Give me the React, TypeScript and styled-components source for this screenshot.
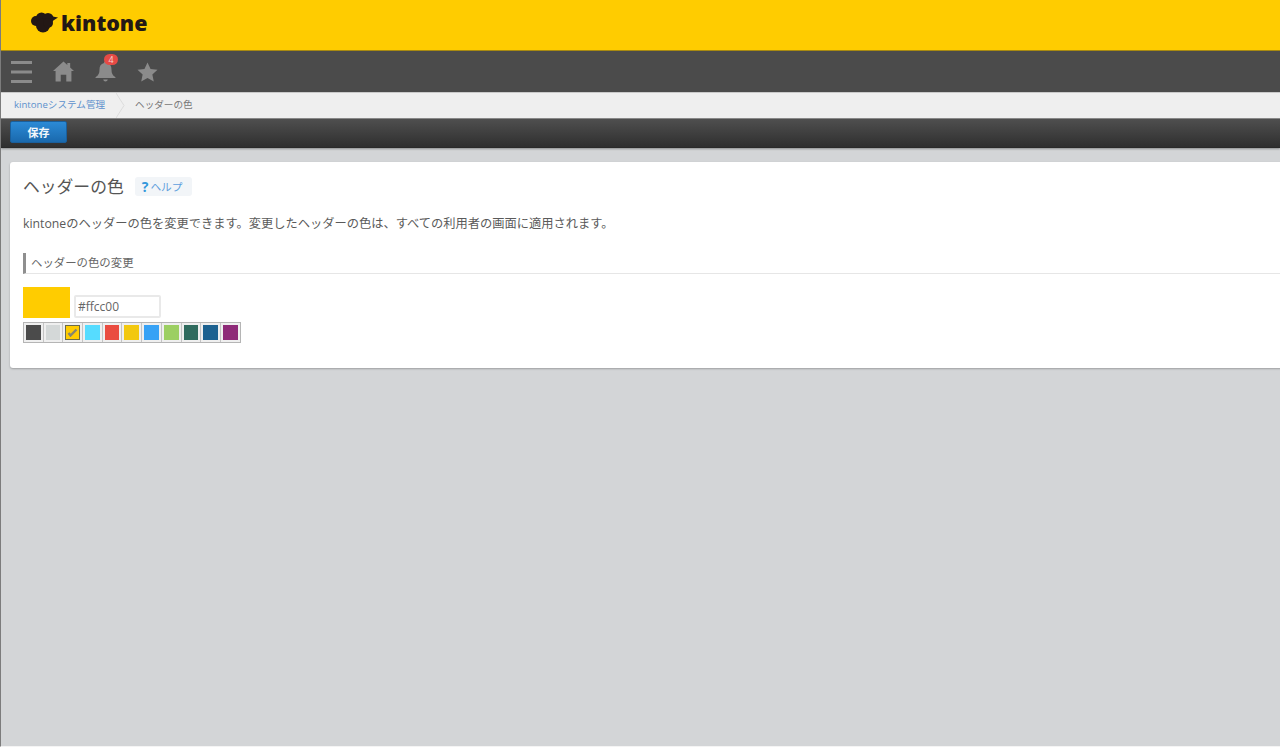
import React from "react";
import styled, { createGlobalStyle } from "styled-components";

const Global = createGlobalStyle`
  html, body { margin: 0; padding: 0; overflow: hidden; }
  body { font-family: "Open Sans", "Noto Sans CJK JP", sans-serif; color: #4a4a4a; }
  * { box-sizing: border-box; }
`;

const Page = styled.div`
  width: 1280px;
  height: 747px;
  display: flex;
  flex-direction: column;
  overflow: hidden;
  border-left: 1px solid #7c7c7c;
  border-bottom: 1px solid #f4f4f4;
  background-color: #d3d5d7;
`;

const BrandBar = styled.header`
  height: 51px;
  flex: none;
  background: #ffcc00;
  border-bottom: 1px solid #a88a10;
  display: flex;
  align-items: center;
  padding: 0 0 5px 30px;
  gap: 3px;
`;

const LogoText = styled.span`
  font-family: "Open Sans", sans-serif;
  font-weight: 800;
  font-size: 21.4px;
  line-height: 30px;
  color: #231815;
`;

const NavBar = styled.nav`
  height: 41px;
  flex: none;
  background: #4b4b4b;
  display: flex;
  align-items: center;
  padding-left: 8px;
  gap: 18px;
`;

const NavIcon = styled.div`
  position: relative;
  width: 24px;
  height: 24px;
  display: flex;
  align-items: center;
  justify-content: center;
`;

const Badge = styled.span`
  position: absolute;
  top: -6px;
  left: 11px;
  width: 14px;
  height: 11px;
  border-radius: 6px;
  background: #e64a45;
  color: #f4d4d0;
  font-family: "Open Sans", sans-serif;
  font-size: 9px;
  line-height: 11px;
  text-align: center;
`;

const Crumbs = styled.div`
  height: 27px;
  flex: none;
  background: #efefef;
  border-top: 1px solid #c9c9c9;
  border-bottom: 1px solid #8c8c8c;
  display: flex;
  align-items: center;
  font-size: 9.6px;
  padding: 0 0 3px 13px;
`;

const CrumbLink = styled.a`
  color: #5c90cc;
`;

const CrumbSep = styled.svg`
  width: 9px;
  height: 25px;
  margin: 3px 10px 0 11px;
  flex: none;
`;

const CrumbCurrent = styled.span`
  color: #777;
`;

const Toolbar = styled.div`
  height: 29px;
  flex: none;
  background: linear-gradient(#4f4f4f, #2f2f2f);
  border-bottom: 1px solid #2a2a2a;
  box-shadow: 0 1px 2px rgba(0,0,0,.35);
  display: flex;
  align-items: center;
  padding: 0 0 2px 9px;
`;

const SaveButton = styled.button`
  width: 57px;
  height: 22px;
  padding: 0;
  border: 1px solid #1a5f9c;
  border-radius: 2px;
  background: linear-gradient(#2b8ad6, #1a69ad);
  color: #f4f8fb;
  font-family: "Noto Sans CJK JP", sans-serif;
  font-size: 11px;
  font-weight: 700;
  line-height: 18px;
`;

const Content = styled.main`
  flex: 1;
  padding: 14px 0 0 9px;
  min-height: 0;
`;

const Card = styled.section`
  width: 1285px;
  height: 206px;
  background: #fff;
  border-radius: 3px;
  box-shadow: 0 1px 2px rgba(0,0,0,.25);
  padding: 14px 0 0 13px;
`;

const TitleRow = styled.div`
  display: flex;
  align-items: center;
  height: 22px;
  gap: 11px;
`;

const Title = styled.h1`
  margin: 0;
  font-size: 16.8px;
  font-weight: 400;
  line-height: 22px;
  color: #555;
`;

const HelpChip = styled.a`
  display: flex;
  align-items: center;
  height: 19px;
  width: 57px;
  margin-bottom: 2px;
  padding-left: 7px;
  background: #f2f5f8;
  border-radius: 3px;
  color: #5f9fdd;
  font-size: 10.7px;
  font-weight: 400;
  gap: 2px;
`;

const HelpMark = styled.span`
  font-family: "Open Sans", sans-serif;
  font-weight: 700;
  font-size: 14px;
  color: #3498db;
`;

const Description = styled.p`
  margin: 16px 0 0;
  font-size: 12.25px;
  line-height: 20px;
  color: #5a5a5a;
  white-space: nowrap;
`;

const SectionHead = styled.h2`
  margin: 19px 0 0;
  height: 21px;
  border-left: 3px solid #8f8f8f;
  border-bottom: 1px solid #e6e6e6;
  padding-left: 5px;
  font-size: 11.4px;
  font-weight: 400;
  line-height: 19px;
  color: #666;
`;

const ColorRow = styled.div`
  display: flex;
  align-items: flex-end;
  gap: 4px;
  margin-top: 13px;
`;

const Preview = styled.div`
  width: 47px;
  height: 31px;
  background: #ffcc00;
`;

const HexInput = styled.input`
  width: 87px;
  height: 23px;
  padding: 0 2px;
  border: 2px solid #e9e9e9;
  border-radius: 2px;
  outline: none;
  font-family: "Open Sans", sans-serif;
  font-size: 12px;
  color: #666;
`;

const Palette = styled.div`
  display: inline-flex;
  margin-top: 4px;
  border: 1px solid #b5b5b5;
  background: #efefef;
`;

const Swatch = styled.div<{ $c: string; $selected?: boolean }>`
  width: 19.7px;
  height: 19px;
  padding: 2px;
  border-right: 1px solid #c4c4c4;
  &:last-child { border-right: 0; width: 19px; }
  & > div {
    width: 100%;
    height: 100%;
    background: ${(p) => p.$c};
    border: ${(p) => (p.$selected ? "1px solid #6b6b4a" : "0")};
    display: flex;
    align-items: center;
    justify-content: center;
  }
`;

const colors = ["#4b4b4b", "#d4d8d8", "#ffcc00", "#56dcff", "#ea4c40", "#f2c80f", "#37a2f5", "#9ccf62", "#2f6b5e", "#1c6190", "#8e2a78"];

export default function App() {
  return (
    <Page>
      <Global />
      <BrandBar>
        <svg width="27" height="21" viewBox="0 0 27 21">
          <g fill="#231815">
            <circle cx="5" cy="9" r="5" />
            <circle cx="10.500" cy="6" r="5.500" />
            <circle cx="17" cy="6.500" r="5.500" />
            <circle cx="12" cy="13.500" r="7" />
            <circle cx="17" cy="11" r="5" />
            <path d="M19 4 27 5.500 20 10Z" />
          </g>
        </svg>
        <LogoText>kintone</LogoText>
      </BrandBar>
      <NavBar>
        <NavIcon>
          <svg width="21" height="22" viewBox="0 0 21 22">
            <path fill="#8b8b8b" d="M0 0h21v3H0zM0 9.500h21v3H0zM0 19h21v3H0z" />
          </svg>
        </NavIcon>
        <NavIcon>
          <svg width="21" height="21" viewBox="0 0 22 21">
            <path fill="#8b8b8b" d="M11 0 15 3.600V1.500h3v4.800L22 10h-2.700v11h-5.400v-7H8.100v7H2.700V10H0Z" />
          </svg>
        </NavIcon>
        <NavIcon>
          <svg width="21" height="23" viewBox="0 0 22 24">
            <path fill="#8b8b8b" d="M11 1.500c1 0 1.600.7 1.600 1.600 3.300.8 4.700 3.400 4.700 7 0 3.800 1 5.800 3.900 7.600.5.4.3 1.100-.4 1.100H1.200c-.7 0-.9-.7-.4-1.100 2.900-1.800 3.900-3.800 3.900-7.600 0-3.600 1.400-6.200 4.700-7C9.400 2.200 10 1.500 11 1.500ZM8.600 20.500h4.800c-.3 1.300-1.200 2-2.400 2s-2.100-.7-2.400-2Z" />
          </svg>
          <Badge>4</Badge>
        </NavIcon>
        <NavIcon>
          <svg width="21" height="20" viewBox="0 0 22 21">
            <path fill="#8b8b8b" d="M11 .5 14.200 7.400 21.500 8.200 16.100 13.200 17.600 20.500 11 16.800 4.400 20.500 5.900 13.200.5 8.200 7.800 7.400Z" />
          </svg>
        </NavIcon>
      </NavBar>
      <Crumbs>
        <CrumbLink>kintoneシステム管理</CrumbLink>
        <CrumbSep viewBox="0 0 9 25">
          <path d="M0 0 8 12.500 0 25" fill="none" stroke="#dcdcdc" />
        </CrumbSep>
        <CrumbCurrent>ヘッダーの色</CrumbCurrent>
      </Crumbs>
      <Toolbar>
        <SaveButton>保存</SaveButton>
      </Toolbar>
      <Content>
        <Card>
          <TitleRow>
            <Title>ヘッダーの色</Title>
            <HelpChip>
              <HelpMark>?</HelpMark>ヘルプ
            </HelpChip>
          </TitleRow>
          <Description>kintoneのヘッダーの色を変更できます。変更したヘッダーの色は、すべての利用者の画面に適用されます。</Description>
          <SectionHead>ヘッダーの色の変更</SectionHead>
          <ColorRow>
            <Preview />
            <HexInput defaultValue="#ffcc00" />
          </ColorRow>
          <Palette>
            {colors.map((c, i) => (
              <Swatch key={c} $c={c} $selected={i === 2}>
                <div>
                  {i === 2 && (
                    <svg width="11" height="9" viewBox="0 0 11 9">
                      <path d="M1.500 5 3.500 7.500 9.500 1.500" fill="none" stroke="#85856e" strokeWidth="2.400" />
                    </svg>
                  )}
                </div>
              </Swatch>
            ))}
          </Palette>
        </Card>
      </Content>
    </Page>
  );
}
